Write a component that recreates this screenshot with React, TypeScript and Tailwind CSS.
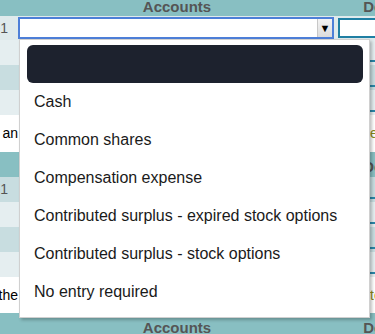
import { useState } from 'react';

const OPTIONS = [
  'Cash',
  'Common shares',
  'Compensation expense',
  'Contributed surplus - expired stock options',
  'Contributed surplus - stock options',
  'No entry required',
];

// row tints used by the journal table under the menu
const ROW_TINTS = ['bg-[#e5eef0]', 'bg-[#c8dde0]', 'bg-[#e5eef0]'];

function HeaderRow({ short }: { short?: boolean }) {
  return (
    <div className={`flex bg-[#88bfc2] ${short ? 'h-[16px] items-start' : 'h-[25px] items-center'}`}>
      <div className="w-[18px] shrink-0" />
      <div className={`w-[318px] shrink-0 text-center text-[15px] font-bold text-[#555] leading-none ${short ? '-mt-[1px]' : 'pt-[3px]'}`}>
        Accounts
      </div>
      <div className={`w-[92px] shrink-0 text-center text-[15px] font-bold text-[#555] leading-none ${short ? '-mt-[1px]' : 'pt-[3px]'}`}>
        Debit
      </div>
    </div>
  );
}

function RowNum({ children }: { children?: React.ReactNode }) {
  return (
    <div className="flex w-[18px] shrink-0 justify-end overflow-hidden whitespace-nowrap pr-[10px] text-[14px] text-[#555]">
      {children}
    </div>
  );
}

function EntryRow({ tint, label }: { tint: string; label?: string }) {
  return (
    <div className={`flex h-[25px] items-center ${tint}`}>
      <RowNum>{label}</RowNum>
      <div className="w-[320px] shrink-0" />
      <div className="w-[70px] shrink-0 h-[19px] border-b-2 border-[#2a86a8]" />
    </div>
  );
}

function NoteRow({ left, right, h }: { left: string; right: string; h: string }) {
  return (
    <div className={`flex items-center bg-white ${h}`}>
      <div className="flex w-[19px] shrink-0 justify-end overflow-hidden whitespace-nowrap pr-[1px] text-[14px] text-black">
        <span className="text-[#1a7fb0]">e</span>&nbsp;{left}
      </div>
      <div className="w-[351px] shrink-0" />
      <div className="shrink-0 text-[14px] text-[#8a8a1a]">{right}</div>
    </div>
  );
}

export default function App() {
  const [selected, setSelected] = useState<string | null>(null);

  return (
    <div className="relative w-[375px] h-[334px] overflow-hidden bg-white font-['Liberation_Sans',Arial,sans-serif]">
      {/* journal table */}
      <div className="w-[440px]">
        <HeaderRow short />
        <div className="flex h-[24px] items-center bg-[#dfeaec]">
          <RowNum>
            <span className="text-[#3a8fd0]">-</span>1
          </RowNum>
          <div className="relative w-[316px] h-[22px] shrink-0 border-2 border-[#4d7fd8] bg-white">
            <div className="absolute right-0 top-0 h-full w-[15px] bg-gradient-to-b from-[#f4f4f4] to-[#dcdcdc] border-l border-[#c8c8c8] flex items-center justify-center text-[11px] text-black">
              ▼
            </div>
          </div>
          <div className="ml-[4px] w-[60px] h-[20px] shrink-0 border-2 border-[#1f7fa3] bg-white" />
        </div>
        {ROW_TINTS.map((t, i) => (
          <EntryRow key={i} tint={t} />
        ))}
        <NoteRow left="an" right="el" h="h-[37px]" />
        <HeaderRow />
        <EntryRow tint="bg-[#c8dde0]" label="-1" />
        {ROW_TINTS.map((t, i) => (
          <EntryRow key={`b${i}`} tint={t} />
        ))}
        <NoteRow left="the" right="te" h="h-[36px]" />
        <HeaderRow />
      </div>

      {/* open accounts dropdown */}
      <div className="absolute left-[19px] top-[39px] w-[351px] h-[279px] bg-white border border-[#d0d0d0] shadow-[2px_2px_3px_rgba(0,0,0,0.25)] px-[7px] pt-[5px]">
        <div className="h-[38px] w-[336px] rounded-[6px] bg-[#1d222e]" />
        <ul>
          {OPTIONS.map(o => (
            <li
              key={o}
              onClick={() => setSelected(o)}
              className={`flex h-[38px] items-center px-[7px] text-[16px] text-[#1a1a1a] cursor-pointer ${
                selected === o ? 'bg-[#eef3f8]' : ''
              }`}
            >
              {o}
            </li>
          ))}
        </ul>
      </div>
    </div>
  );
}
